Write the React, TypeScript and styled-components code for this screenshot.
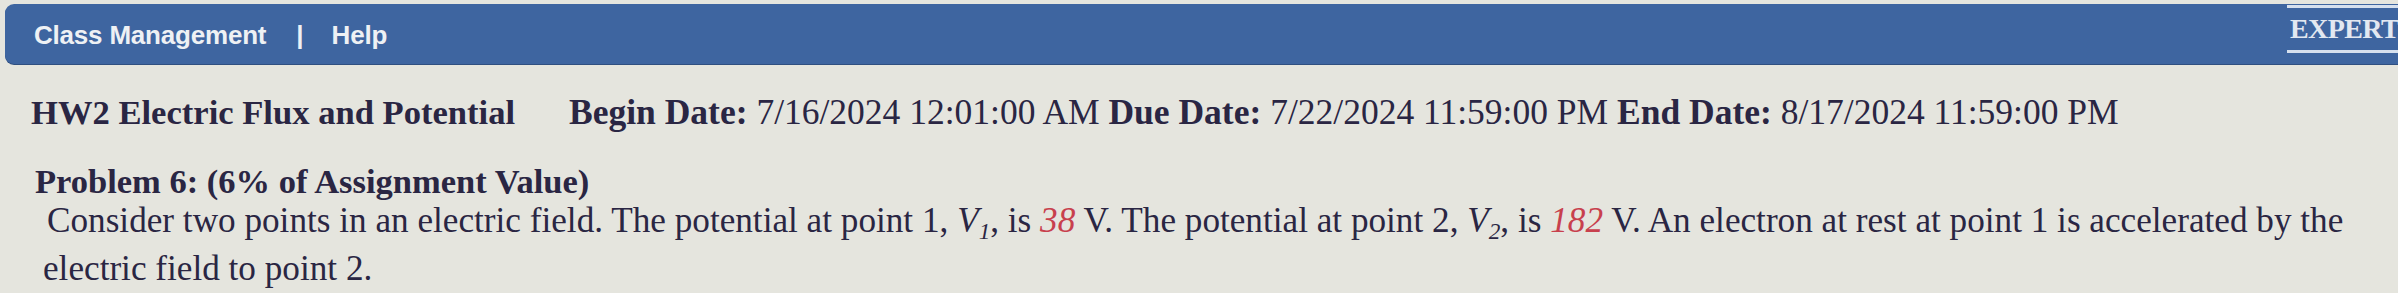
import React from "react";
import styled, { createGlobalStyle } from "styled-components";

const GlobalStyle = createGlobalStyle`
  html, body {
    margin: 0;
    padding: 0;
    background: #e5e5de;
    overflow: hidden;
  }
  body {
    width: 2398px;
    height: 293px;
    font-family: "Liberation Serif", "Times New Roman", serif;
    color: #2a2643;
  }
`;

const Page = styled.div`
  width: 2398px;
  height: 293px;
  overflow: hidden;
  background: #e5e5de;
`;

const TopBar = styled.header`
  display: flex;
  align-items: center;
  height: 60px;
  margin: 4px 0 0 5px;
  padding-left: 29px;
  background: #3e65a0;
  border-radius: 9px 0 0 9px;
  box-shadow: 0 1px 0 #2f4f80;
  overflow: hidden;
`;

const NavLink = styled.span`
  font-family: "Liberation Sans", Arial, sans-serif;
  font-weight: 700;
  font-size: 26px;
  color: #eef1f4;
  letter-spacing: -0.2px;
  padding-top: 2px;
`;

const NavDivider = styled.span`
  font-family: "Liberation Sans", Arial, sans-serif;
  font-weight: 700;
  font-size: 26px;
  color: #eef1f4;
  margin: 0 28px 0 30px;
  padding-top: 2px;
`;

const Logo = styled.div`
  margin-left: auto;
  align-self: flex-start;
  display: flex;
  flex-direction: column;
  width: 111px;
  flex-shrink: 0;
  padding-top: 1px;
  overflow: hidden;
`;

const LogoRule = styled.div`
  height: 3px;
  background: #d6e0ee;
`;

const LogoText = styled.span`
  font-family: "Liberation Serif", "Times New Roman", serif;
  font-weight: 700;
  font-size: 28px;
  line-height: 42px;
  color: #e2e8f1;
  white-space: nowrap;
  letter-spacing: -0.6px;
  padding-left: 3px;
`;

const TitleRow = styled.div`
  display: flex;
  align-items: baseline;
  margin-top: 28px;
  padding-left: 31px;
  height: 40px;
  line-height: 40px;
  font-size: 35.5px;
  white-space: nowrap;
`;

const Title = styled.span`
  font-weight: 700;
  font-size: 34.6px;
  margin-right: 54px;
`;

const DateLabel = styled.span`
  font-weight: 700;
`;

const DateValue = styled.span`
  font-weight: 400;
`;

const ProblemHeading = styled.div`
  margin-top: 33px;
  padding-left: 35px;
  font-weight: 700;
  font-size: 34.5px;
  line-height: 32px;
  white-space: nowrap;
`;

const ProblemBody = styled.p`
  margin: 0;
  padding: 0 20px 0 43px;
  text-indent: 4px;
  font-size: 35.2px;
  line-height: 48px;
`;

const Var = styled.i`
  font-style: italic;
`;

const Sub = styled.sub`
  font-size: 0.66em;
  font-style: italic;
  vertical-align: -0.28em;
  line-height: 0;
`;

const Given = styled.i`
  font-style: italic;
  color: #c8404d;
`;

export default function App() {
  return (
    <Page>
      <GlobalStyle />
      <TopBar>
        <NavLink>Class Management</NavLink>
        <NavDivider>|</NavDivider>
        <NavLink>Help</NavLink>
        <Logo>
          <LogoRule />
          <LogoText>EXPERT</LogoText>
          <LogoRule />
        </Logo>
      </TopBar>
      <TitleRow>
        <Title>HW2 Electric Flux and Potential</Title>
        <span>
          <DateLabel>Begin Date: </DateLabel>
          <DateValue>7/16/2024 12:01:00 AM </DateValue>
          <DateLabel>Due Date: </DateLabel>
          <DateValue>7/22/2024 11:59:00 PM </DateValue>
          <DateLabel>End Date: </DateLabel>
          <DateValue>8/17/2024 11:59:00 PM</DateValue>
        </span>
      </TitleRow>
      <ProblemHeading>Problem 6: (6% of Assignment Value)</ProblemHeading>
      <ProblemBody>
        Consider two points in an electric field. The potential at point 1,{" "}
        <Var>V</Var>
        <Sub>1</Sub>, is <Given>38</Given> V. The potential at point 2,{" "}
        <Var>V</Var>
        <Sub>2</Sub>, is <Given>182</Given> V. An electron at rest at point 1 is
        accelerated by the electric field to point 2.
      </ProblemBody>
    </Page>
  );
}
